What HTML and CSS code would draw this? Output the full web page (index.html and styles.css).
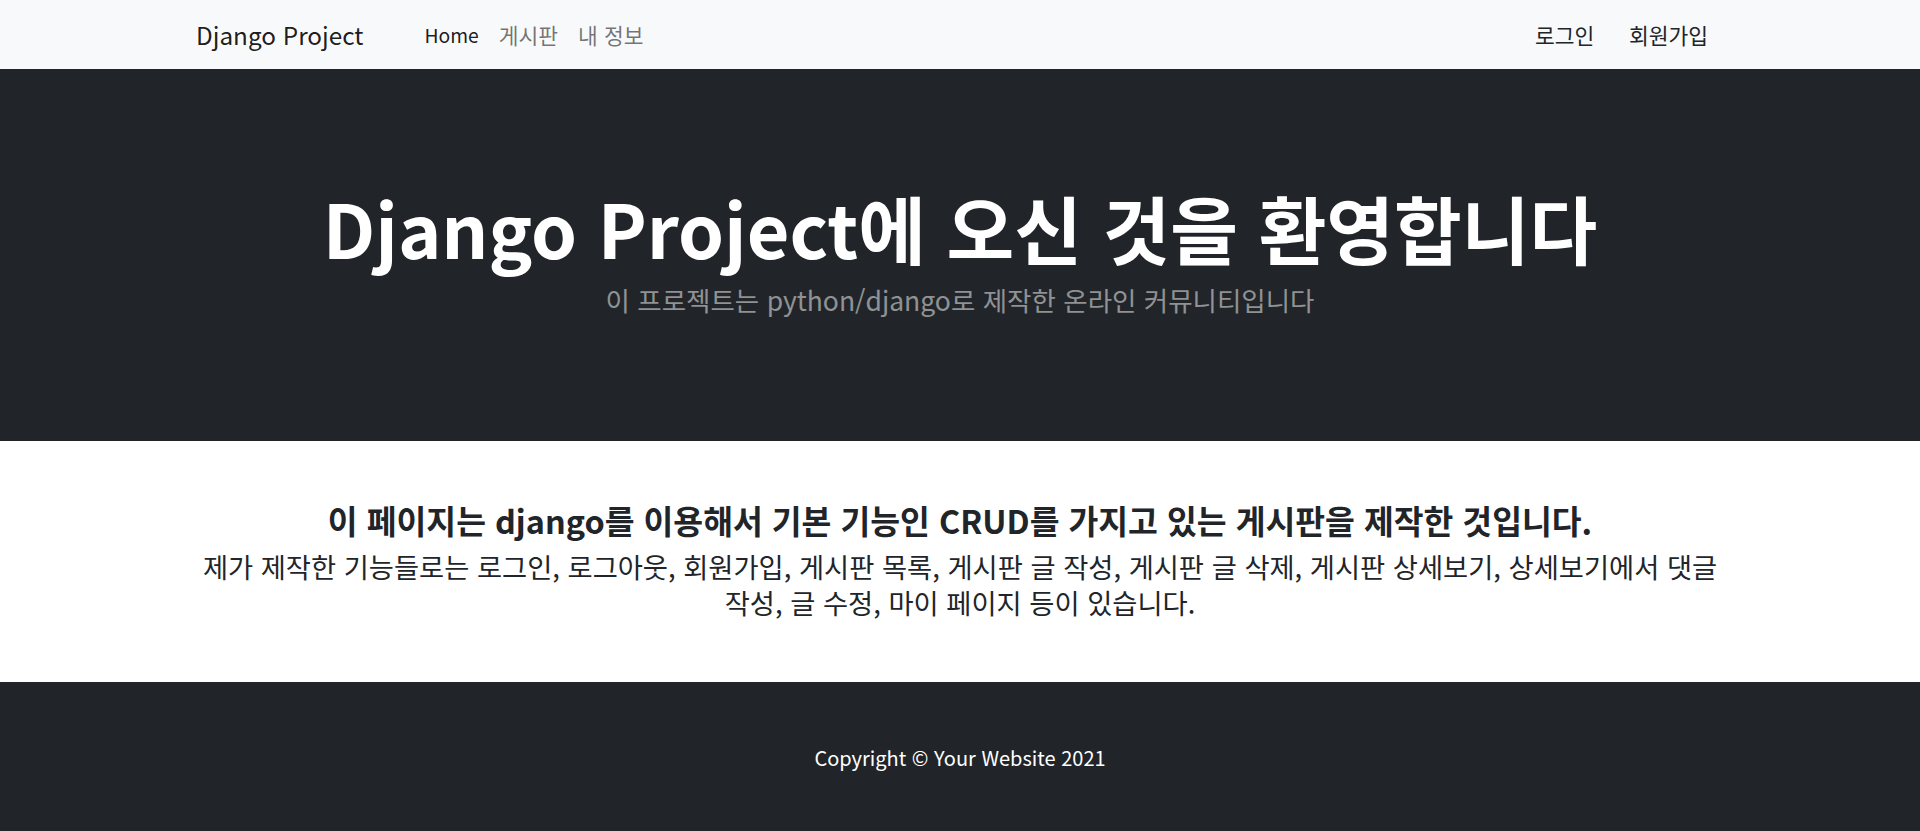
FILE: index.html
```html
<!DOCTYPE html>
<html lang="ko">
<head>
<meta charset="utf-8">
<title>Django Project</title>
<link rel="stylesheet" href="styles.css">
</head>
<body>
<nav class="navbar">
  <div class="container nav-inner">
    <a class="brand" href="#">Django Project</a>
    <ul class="nav-links">
      <li><a class="nav-link latin active" href="#">Home</a></li>
      <li><a class="nav-link" href="#">게시판</a></li>
      <li><a class="nav-link" href="#">내 정보</a></li>
    </ul>
    <ul class="nav-links nav-right">
      <li><a class="nav-link dark" href="#">로그인</a></li>
      <li><a class="nav-link dark" href="#">회원가입</a></li>
    </ul>
  </div>
</nav>
<header class="hero">
  <div class="container hero-inner">
    <h1 class="hero-title">Django Project에 오신 것을 환영합니다</h1>
    <p class="hero-lead">이 프로젝트는 python/django로 제작한 온라인 커뮤니티입니다</p>
  </div>
</header>
<section class="intro">
  <div class="container intro-inner">
    <h2 class="intro-title">이 페이지는 django를 이용해서 기본 기능인 CRUD를 가지고 있는 게시판을 제작한 것입니다.</h2>
    <p class="intro-text">제가 제작한 기능들로는 로그인, 로그아웃, 회원가입, 게시판 목록, 게시판 글 작성, 게시판 글 삭제, 게시판 상세보기, 상세보기에서 댓글 작성, 글 수정, 마이 페이지 등이 있습니다.</p>
  </div>
</section>
<footer class="footer">
  <div class="container">
    <p class="footer-text">Copyright © Your Website 2021</p>
  </div>
</footer>
</body>
</html>
```
FILE: styles.css
```css
* { box-sizing: border-box; }
html, body { margin: 0; padding: 0; }
body {
  font-family: "Noto Sans CJK KR", "Noto Sans", sans-serif;
  color: #212529;
  background: #fff;
  word-break: keep-all;
}
a { text-decoration: none; }
.container {
  width: 1528px;
  margin: 0 auto;
}
.navbar {
  background: #f8f9fa;
  height: 69px;
}
.nav-inner {
  display: flex;
  align-items: center;
  height: 100%;
}
.brand {
  font-size: 24.3px;
  color: rgba(0, 0, 0, 0.9);
  margin-right: 51px;
}
.nav-links {
  display: flex;
  align-items: center;
  list-style: none;
  margin: 0;
  padding: 0;
}
.nav-link {
  display: block;
  font-size: 21.5px;
  line-height: 30px;
  padding: 0 10px;
  color: rgba(0, 0, 0, 0.55);
}
.nav-link.latin { font-size: 19.3px; }
.nav-link.active { color: rgba(0, 0, 0, 0.9); }
.nav-right {
  margin-left: auto;
  gap: 14.5px;
  margin-right: 6px;
}
.nav-link.dark { color: #212529; }
.hero {
  background: #212529;
}
.hero-inner {
  padding: 116px 0 123px;
  text-align: center;
}
.hero-title {
  margin: 0;
  font-size: 73.6px;
  font-weight: 700;
  line-height: 84px;
  color: #fff;
}
.hero-lead {
  margin: 12px 0 0;
  font-size: 26.5px;
  line-height: 37px;
  color: rgba(255, 255, 255, 0.5);
}
.intro-inner {
  padding: 58px 0 62px;
  text-align: center;
}
.intro-title {
  margin: 0 0 8px;
  font-size: 32.4px;
  font-weight: 700;
  line-height: 42px;
}
.intro-text {
  margin: 0;
  font-size: 27.3px;
  line-height: 35.5px;
}
.footer {
  background: #212529;
  padding: 61px 0 58px;
}
.footer-text {
  margin: 0;
  text-align: center;
  color: #fff;
  font-size: 20px;
  line-height: 30px;
}
```
